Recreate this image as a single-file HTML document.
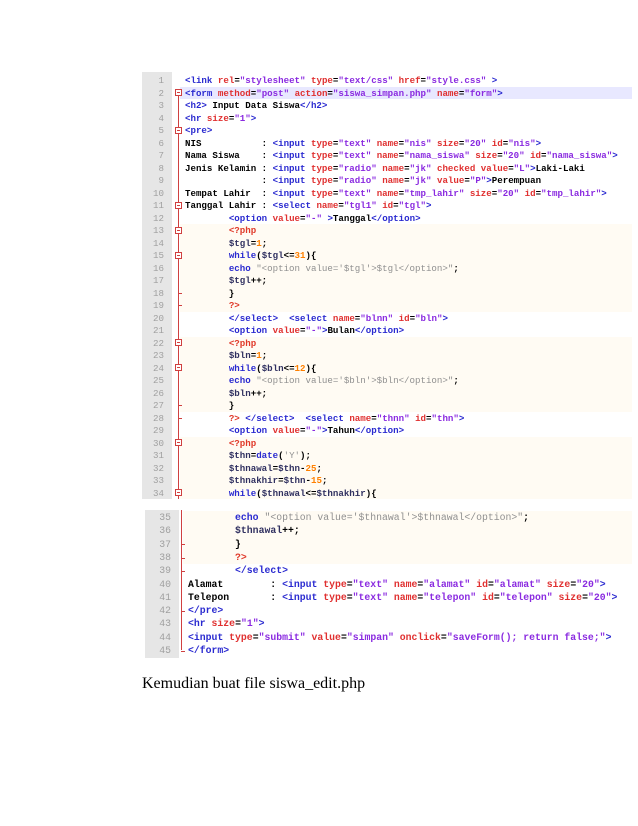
<!DOCTYPE html>
<html><head><meta charset="utf-8"><style>
body{margin:0;width:638px;height:826px;background:#fff;position:relative;overflow:hidden}
.blk{position:absolute;font-family:"Liberation Mono",monospace;font-weight:bold;white-space:pre;color:#000}
.ln{position:absolute;left:0;right:0}
.num{position:absolute;left:0;text-align:right;color:#a0a0a0;font-weight:normal}
.code{position:absolute}
.t{color:#2a2ad0}.a{color:#e03030}.v{color:#8a2ae0}.p{color:#e03a2a}.n{color:#ff8000}.s{color:#909090;font-weight:normal}.f{color:#2a2ad0}.d{color:#303060}
.hl{background:#e8e8ff}.cr{background:#fffbf3}
.box{position:absolute;width:7px;height:7px;border:1px solid #d04040;background:#fff;box-sizing:border-box}
.box:after{content:"";position:absolute;left:1px;right:1px;top:2px;height:1px;background:#d04040}
.tick{position:absolute;width:4px;height:1px;background:#d04040}
</style></head><body>

<div class="blk" id="b1" style="left:142px;top:72px;width:490px;height:427px;font-size:9.15px">
<div style="position:absolute;left:0;top:0;width:30px;height:427px;background:#e6e6e6"></div>
<div style="position:absolute;left:36px;top:22px;width:1px;height:405px;background:#d04040"></div>
</div>

<div class="blk" id="b2" style="left:145px;top:510px;width:487px;height:148px;font-size:9.8px">
<div style="position:absolute;left:0;top:0;width:34px;height:148px;background:#e6e6e6"></div>
<div style="position:absolute;left:36px;top:0;width:1px;height:140px;background:#d04040"></div>
</div>

<div style="position:absolute;left:142px;top:675px;font-family:'Liberation Serif',serif;font-size:16px;color:#000">Kemudian buat file siswa_edit.php</div>

<script>
var L1=[
['<span class="t">&lt;link</span> <span class="a">rel</span>=<span class="v">"stylesheet"</span> <span class="a">type</span>=<span class="v">"text/css"</span> <span class="a">href</span>=<span class="v">"style.css"</span> <span class="t">&gt;</span>',''],
['<span class="t">&lt;form</span> <span class="a">method</span>=<span class="v">"post"</span> <span class="a">action</span>=<span class="v">"siswa_simpan.php"</span> <span class="a">name</span>=<span class="v">"form"</span><span class="t">&gt;</span>','hl','b'],
['<span class="t">&lt;h2&gt;</span> Input Data Siswa<span class="t">&lt;/h2&gt;</span>',''],
['<span class="t">&lt;hr</span> <span class="a">size</span>=<span class="v">"1"</span><span class="t">&gt;</span>',''],
['<span class="t">&lt;pre&gt;</span>','','b'],
['NIS           : <span class="t">&lt;input</span> <span class="a">type</span>=<span class="v">"text"</span> <span class="a">name</span>=<span class="v">"nis"</span> <span class="a">size</span>=<span class="v">"20"</span> <span class="a">id</span>=<span class="v">"nis"</span><span class="t">&gt;</span>',''],
['Nama Siswa    : <span class="t">&lt;input</span> <span class="a">type</span>=<span class="v">"text"</span> <span class="a">name</span>=<span class="v">"nama_siswa"</span> <span class="a">size</span>=<span class="v">"20"</span> <span class="a">id</span>=<span class="v">"nama_siswa"</span><span class="t">&gt;</span>',''],
['Jenis Kelamin : <span class="t">&lt;input</span> <span class="a">type</span>=<span class="v">"radio"</span> <span class="a">name</span>=<span class="v">"jk"</span> <span class="a">checked</span> <span class="a">value</span>=<span class="v">"L"</span><span class="t">&gt;</span>Laki-Laki',''],
['              : <span class="t">&lt;input</span> <span class="a">type</span>=<span class="v">"radio"</span> <span class="a">name</span>=<span class="v">"jk"</span> <span class="a">value</span>=<span class="v">"P"</span><span class="t">&gt;</span>Perempuan',''],
['Tempat Lahir  : <span class="t">&lt;input</span> <span class="a">type</span>=<span class="v">"text"</span> <span class="a">name</span>=<span class="v">"tmp_lahir"</span> <span class="a">size</span>=<span class="v">"20"</span> <span class="a">id</span>=<span class="v">"tmp_lahir"</span><span class="t">&gt;</span>',''],
['Tanggal Lahir : <span class="t">&lt;select</span> <span class="a">name</span>=<span class="v">"tgl1"</span> <span class="a">id</span>=<span class="v">"tgl"</span><span class="t">&gt;</span>','','b'],
['        <span class="t">&lt;option</span> <span class="a">value</span>=<span class="v">"-"</span> <span class="t">&gt;</span>Tanggal<span class="t">&lt;/option&gt;</span>',''],
['        <span class="p">&lt;?php</span>','cr','b'],
['        <span class="d">$tgl</span>=<span class="n">1</span>;','cr'],
['        <span class="f">while</span>(<span class="d">$tgl</span>&lt;=<span class="n">31</span>){','cr','b'],
['        <span class="f">echo</span> <span class="s">"&lt;option value=\'$tgl\'&gt;$tgl&lt;/option&gt;"</span>;','cr'],
['        <span class="d">$tgl</span>++;','cr'],
['        }','cr','t'],
['        <span class="p">?&gt;</span>','cr','t'],
['        <span class="t">&lt;/select&gt;</span>  <span class="t">&lt;select</span> <span class="a">name</span>=<span class="v">"blnn"</span> <span class="a">id</span>=<span class="v">"bln"</span><span class="t">&gt;</span>',''],
['        <span class="t">&lt;option</span> <span class="a">value</span>=<span class="v">"-"</span><span class="t">&gt;</span>Bulan<span class="t">&lt;/option&gt;</span>',''],
['        <span class="p">&lt;?php</span>','cr','b'],
['        <span class="d">$bln</span>=<span class="n">1</span>;','cr'],
['        <span class="f">while</span>(<span class="d">$bln</span>&lt;=<span class="n">12</span>){','cr','b'],
['        <span class="f">echo</span> <span class="s">"&lt;option value=\'$bln\'&gt;$bln&lt;/option&gt;"</span>;','cr'],
['        <span class="d">$bln</span>++;','cr'],
['        }','cr','t'],
['        <span class="p">?&gt;</span> <span class="t">&lt;/select&gt;</span>  <span class="t">&lt;select</span> <span class="a">name</span>=<span class="v">"thnn"</span> <span class="a">id</span>=<span class="v">"thn"</span><span class="t">&gt;</span>','','t'],
['        <span class="t">&lt;option</span> <span class="a">value</span>=<span class="v">"-"</span><span class="t">&gt;</span>Tahun<span class="t">&lt;/option&gt;</span>',''],
['        <span class="p">&lt;?php</span>','cr','b'],
['        <span class="d">$thn</span>=<span class="f">date</span>(<span class="s">\'Y\'</span>);','cr'],
['        <span class="d">$thnawal</span>=<span class="d">$thn</span>-<span class="n">25</span>;','cr'],
['        <span class="d">$thnakhir</span>=<span class="d">$thn</span>-<span class="n">15</span>;','cr'],
['        <span class="f">while</span>(<span class="d">$thnawal</span>&lt;=<span class="d">$thnakhir</span>){','cr','b']
];
var L2=[
['        <span class="f">echo</span> <span class="s">"&lt;option value=\'$thnawal\'&gt;$thnawal&lt;/option&gt;"</span>;','cr'],
['        <span class="d">$thnawal</span>++;','cr'],
['        }','cr','t'],
['        <span class="p">?&gt;</span>','cr','t'],
['        <span class="t">&lt;/select&gt;</span>','','t'],
['Alamat        : <span class="t">&lt;input</span> <span class="a">type</span>=<span class="v">"text"</span> <span class="a">name</span>=<span class="v">"alamat"</span> <span class="a">id</span>=<span class="v">"alamat"</span> <span class="a">size</span>=<span class="v">"20"</span><span class="t">&gt;</span>',''],
['Telepon       : <span class="t">&lt;input</span> <span class="a">type</span>=<span class="v">"text"</span> <span class="a">name</span>=<span class="v">"telepon"</span> <span class="a">id</span>=<span class="v">"telepon"</span> <span class="a">size</span>=<span class="v">"20"</span><span class="t">&gt;</span>',''],
['<span class="t">&lt;/pre&gt;</span>','','t'],
['<span class="t">&lt;hr</span> <span class="a">size</span>=<span class="v">"1"</span><span class="t">&gt;</span>',''],
['<span class="t">&lt;input</span> <span class="a">type</span>=<span class="v">"submit"</span> <span class="a">value</span>=<span class="v">"simpan"</span> <span class="a">onclick</span>=<span class="v">"saveForm(); return false;"</span><span class="t">&gt;</span>',''],
['<span class="t">&lt;/form&gt;</span>','','t']
];
function build(id,lines,start,top,lh,numW,codeL,foldX,bgL){
 var b=document.getElementById(id),h='';
 for(var i=0;i<lines.length;i++){
  var y=top+i*lh,l=lines[i];
  if(l[1]) h+='<div class="ln '+l[1]+'" style="top:'+y+'px;height:'+lh+'px;left:'+bgL+'px"></div>';
  h+='<div class="num" style="top:'+(y+1)+'px;width:'+(numW-8)+'px">'+(start+i)+'</div>';
  h+='<div class="code" style="top:'+(y+1)+'px;left:'+codeL+'px">'+l[0]+'</div>';
  if(l[2]=='b') h+='<div class="box" style="top:'+(y+lh/2-3.5)+'px;left:'+(foldX-3)+'px"></div>';
  if(l[2]=='t') h+='<div class="tick" style="top:'+(y+lh/2)+'px;left:'+foldX+'px"></div>';
 }
 b.innerHTML+=h;
}
build('b1',L1,1,2,12.5,30,43,36,38);
build('b2',L2,35,1,13.3,34,43,36,38);
</script>
</body></html>
